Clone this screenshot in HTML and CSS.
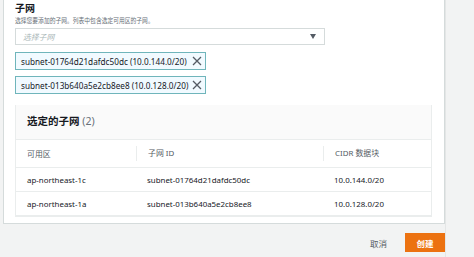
FILE: index.html
```html
<!DOCTYPE html>
<html lang="zh">
<head>
    <meta charset="UTF-8">
    <meta name="viewport" content="width=device-width, initial-scale=1.0">
    <title>创建子网</title>
    <link rel="stylesheet" href="styles.css">
</head>
<body>
    <div class="page">
        <div class="main">
            <div class="card">
                <div class="field-label">子网</div>
                <div class="field-desc">选择您要添加的子网。列表中包含选定可用区的子网。</div>
                <div class="select">
                    <span class="placeholder">选择子网</span>
                    <span class="caret"></span>
                </div>

                <div class="token">
                    <span>subnet-01764d21dafdc50dc (10.0.144.0/20)</span>
                    <svg class="token-x" width="10" height="10" viewBox="0 0 10 10"><path d="M1 1L9 9M9 1L1 9" stroke="#545b64" stroke-width="1.3" fill="none"/></svg>
                </div>
                <div class="token">
                    <span>subnet-013b640a5e2cb8ee8 (10.0.128.0/20)</span>
                    <svg class="token-x" width="10" height="10" viewBox="0 0 10 10"><path d="M1 1L9 9M9 1L1 9" stroke="#545b64" stroke-width="1.3" fill="none"/></svg>
                </div>

                <div class="table-box">
                    <div class="table-title">选定的子网 <span class="count">(2)</span></div>
                    <div class="row head">
                        <div class="cell c1">可用区</div>
                        <div class="cell c2">子网 ID</div>
                        <div class="cell c3">CIDR 数据块</div>
                    </div>
                    <div class="row">
                        <div class="cell c1">ap-northeast-1c</div>
                        <div class="cell c2">subnet-01764d21dafdc50dc</div>
                        <div class="cell c3">10.0.144.0/20</div>
                    </div>
                    <div class="row">
                        <div class="cell c1">ap-northeast-1a</div>
                        <div class="cell c2">subnet-013b640a5e2cb8ee8</div>
                        <div class="cell c3">10.0.128.0/20</div>
                    </div>
                </div>
            </div>

            <div class="footer">
                <button class="btn-link">取消</button>
                <button class="btn-primary">创建</button>
            </div>
        </div>
        <div class="side"></div>
    </div>
</body>
</html>
```

FILE: styles.css
```css
body {
    margin: 0;
    background-color: #f2f3f3;
    font-family: "Noto Sans", "Noto Sans CJK SC", sans-serif;
    color: #16191f;
    overflow: hidden;
}

.page {
    display: flex;
    width: 474px;
    height: 257px;
}

.main {
    width: 442px;
    padding-left: 3px;
    display: flex;
    flex-direction: column;
}

.side {
    flex: 1;
    border-left: 1px solid #e4e6e6;
}

.card {
    background-color: #fff;
    border: 1px solid #d5dbdb;
    border-top: none;
    padding: 1px 11px 11px 11px;
    height: 211px;
}

.field-label {
    font-size: 10px;
    font-weight: bold;
    line-height: 14px;
}

.field-desc {
    font-size: 6.8px;
    line-height: 11px;
    color: #687078;
    white-space: nowrap;
    transform: scaleX(0.85);
    transform-origin: left center;
}

.select {
    margin-top: 2px;
    height: 15px;
    border: 1px solid #d5dbdb;
    display: flex;
    align-items: center;
    justify-content: space-between;
    padding: 0 8px 0 7px;
    width: 293px;
}

.placeholder {
    font-size: 7.8px;
    font-style: italic;
    color: #aab7b8;
}

.caret {
    width: 0;
    height: 0;
    border-left: 3.5px solid transparent;
    border-right: 3.5px solid transparent;
    border-top: 5px solid #545b64;
}

.token {
    margin-top: 7px;
    display: flex;
    align-items: center;
    width: 191px;
    height: 18px;
    border: 1px solid #6fb5bb;
    background-color: #f1faff;
    font-size: 8.2px;
    white-space: nowrap;
    padding-left: 5px;
    box-sizing: border-box;
}

.token + .token {
    margin-top: 6px;
}

.token-x {
    margin-left: auto;
    margin-right: 3px;
}

.table-box {
    margin-top: 11px;
    width: 417px;
    border: 1px solid #eaeded;
    border-top: none;
    box-sizing: border-box;
}

.table-title {
    background-color: #fafafa;
    height: 34px;
    line-height: 33px;
    padding-left: 11px;
    font-size: 10.5px;
    font-weight: bold;
    border-bottom: 1px solid #eaeded;
}

.count {
    font-weight: normal;
    color: #687078;
}

.row {
    display: flex;
    height: 23px;
    align-items: center;
    border-bottom: 1px solid #eaeded;
    font-size: 7.9px;
}

.row.head {
    height: 27px;
    color: #545b64;
}

.cell {
    padding-left: 11px;
    box-sizing: border-box;
}

.c1 { width: 120px; }
.c2 { width: 187px; }
.c3 { flex: 1; }

.head .c2,
.head .c3 {
    border-left: 1px solid #eaeded;
    height: 15px;
    line-height: 15px;
}

.footer {
    flex: 1;
    display: flex;
    justify-content: flex-end;
    align-items: center;
    padding-top: 4px;
    gap: 18px;
}

.btn-link {
    border: none;
    background: none;
    font-family: inherit;
    font-size: 8.5px;
    color: #545b64;
    padding: 0;
    cursor: pointer;
}

.btn-primary {
    border: none;
    background-color: #ec7211;
    color: #fff;
    font-family: inherit;
    font-size: 8.5px;
    font-weight: bold;
    width: 40px;
    height: 19px;
    padding: 0;
    cursor: pointer;
}
```
